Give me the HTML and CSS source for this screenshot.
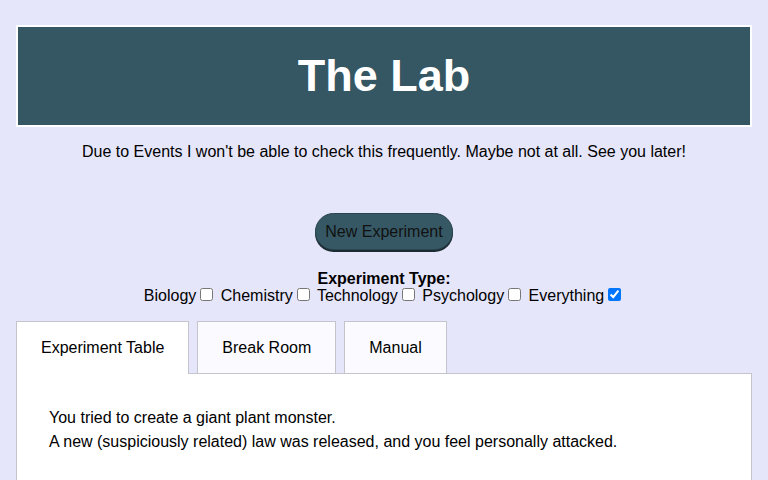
FILE: index.html
```html
<!DOCTYPE html>
<html>
<head>
<meta charset="utf-8">
<link rel="stylesheet" href="styles.css">
</head>
<body>
<header class="banner"><h1 class="title">The Lab</h1></header>
<p class="notice">Due to Events I won't be able to check this frequently. Maybe not at all. See you later!</p>
<div class="actions"><button class="new-btn">New Experiment</button></div>
<div class="types">
  <div class="types-label">Experiment Type:</div>
  <div class="types-list">
    <label>Biology<input type="checkbox"></label>
    <label>Chemistry<input type="checkbox"></label>
    <label>Technology<input type="checkbox"></label>
    <label>Psychology<input type="checkbox"></label>
    <label>Everything<input type="checkbox" checked></label>
  </div>
</div>
<nav class="tabs">
  <div class="tab active">Experiment Table</div>
  <div class="tab">Break Room</div>
  <div class="tab">Manual</div>
</nav>
<section class="panel">
  <p class="line">You tried to create a giant plant monster.</p>
  <p class="line">A new (suspiciously related) law was released, and you feel personally attacked.</p>
</section>
</body>
</html>
```

FILE: styles.css
```css
html, body {
  margin: 0;
  padding: 0;
  background: #e6e6fa;
  font-family: "Liberation Sans", Arial, sans-serif;
  font-size: 16px;
  color: #000;
}
body {
  padding: 25px 16px 0;
  height: 480px;
  box-sizing: border-box;
  overflow: hidden;
}
.banner {
  background: #355663;
  border: 2px solid #fff;
  height: 98px;
  display: flex;
  align-items: center;
  justify-content: center;
}
.title {
  margin: 0;
  color: #fff;
  font-size: 45px;
  font-weight: bold;
  line-height: 50px;
}
.notice {
  margin: 16px 0 0;
  text-align: center;
  line-height: 18px;
}
.actions {
  display: flex;
  justify-content: center;
  margin-top: 52px;
}
.new-btn {
  font-family: "Liberation Sans", Arial, sans-serif;
  font-size: 16px;
  color: #111;
  background: #365864;
  border: 1px solid #2a4550;
  border-radius: 19px;
  height: 37px;
  width: 138px;
  padding: 0;
  box-shadow: 0 2px 0 #1b2b31;
}
.types {
  margin-top: 20px;
  text-align: center;
  line-height: 17px;
}
.types-label {
  font-weight: bold;
}
.types-list label input {
  margin: 0 3px 0 4px;
  vertical-align: 0;
}
.tabs {
  display: flex;
  gap: 8px;
  margin-top: 16px;
}
.tab {
  padding: 16px 24px;
  line-height: 19px;
  border: 1px solid #c4c4cc;
  border-bottom: none;
  background: #fbfbff;
  position: relative;
  top: 1px;
  height: 52px;
  box-sizing: border-box;
}
.tab.active {
  background: #fff;
  height: 53px;
  z-index: 1;
}
.panel {
  background: #fff;
  border: 1px solid #c4c4cc;
  padding: 32px 32px 31px;
  height: 200px;
}
.line {
  margin: 0;
  line-height: 24px;
}
```
